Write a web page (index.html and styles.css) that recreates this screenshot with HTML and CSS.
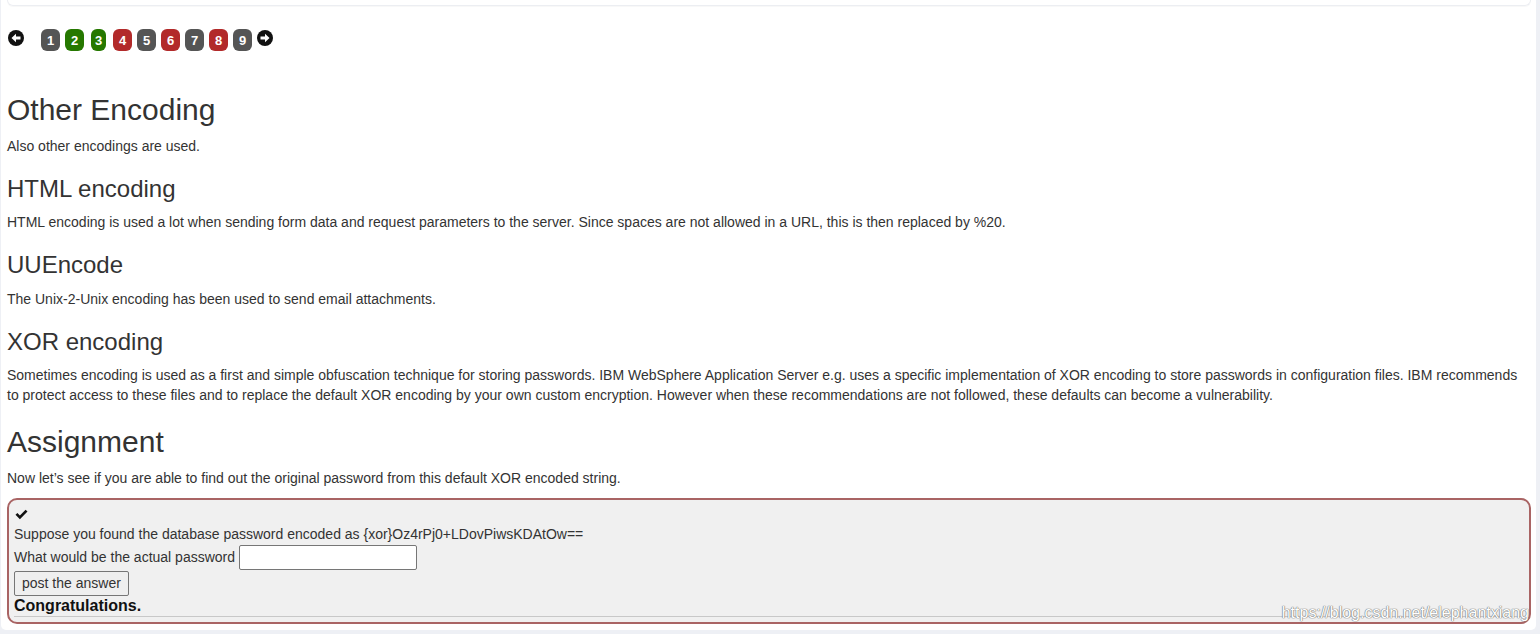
FILE: index.html
```html
<!DOCTYPE html>
<html>
<head>
<meta charset="utf-8">
<link rel="stylesheet" href="styles.css">
</head>
<body>
<div class="panel">
  <div class="top-card"></div>
  <div class="pager">
    <span class="arrow"><svg width="16" height="16" viewBox="0 0 16 16"><circle cx="8" cy="8" r="8" fill="#111"/><path d="M3.5 8 L8 3.8 L8 6.4 L12.5 6.4 L12.5 9.6 L8 9.6 L8 12.2 Z" fill="#fff"/></svg></span>
    <span class="pages">
      <span class="pg gray">1</span>
      <span class="pg green">2</span>
      <span class="pg green narrow">3</span>
      <span class="pg red">4</span>
      <span class="pg gray">5</span>
      <span class="pg red">6</span>
      <span class="pg gray">7</span>
      <span class="pg red">8</span>
      <span class="pg gray">9</span>
    </span>
    <span class="arrow"><svg width="16" height="16" viewBox="0 0 16 16"><circle cx="8" cy="8" r="8" fill="#111"/><path d="M12.5 8 L8 3.8 L8 6.4 L3.5 6.4 L3.5 9.6 L8 9.6 L8 12.2 Z" fill="#fff"/></svg></span>
  </div>

  <h2>Other Encoding</h2>
  <p>Also other encodings are used.</p>
  <h3>HTML encoding</h3>
  <p>HTML encoding is used a lot when sending form data and request parameters to the server. Since spaces are not allowed in a URL, this is then replaced by %20.</p>
  <h3>UUEncode</h3>
  <p>The Unix-2-Unix encoding has been used to send email attachments.</p>
  <h3>XOR encoding</h3>
  <p>Sometimes encoding is used as a first and simple obfuscation technique for storing passwords. IBM WebSphere Application Server e.g. uses a specific implementation of XOR encoding to store passwords in configuration files. IBM recommends to protect access to these files and to replace the default XOR encoding by your own custom encryption. However when these recommendations are not followed, these defaults can become a vulnerability.</p>
  <h2>Assignment</h2>
  <p>Now let’s see if you are able to find out the original password from this default XOR encoded string.</p>

  <div class="attack">
    <div class="check"><svg width="13" height="11" viewBox="0 0 13 11"><path d="M0.5 5.8 L2.4 3.9 L4.9 6.4 L10.6 0.7 L12.5 2.6 L4.9 10.2 Z" fill="#111"/></svg></div>
    <div class="line">Suppose you found the database password encoded as {xor}Oz4rPj0+LDovPiwsKDAtOw==</div>
    <div class="line input-line"><span>What would be the actual password</span><input class="field" type="text"></div>
    <div class="btn-line"><button class="btn">post the answer</button></div>
    <div class="feedback">Congratulations.</div>
    <div class="rule"></div>
    <span class="watermark">https://blog.csdn.net/elephantxiang</span>
  </div>
</div>
</body>
</html>
```

FILE: styles.css
```css
html, body {
  margin: 0;
  padding: 0;
}
body {
  background: #eef0f5;
  font-family: "Liberation Sans", Arial, Helvetica, sans-serif;
  font-size: 14px;
  line-height: 20px;
  color: #333;
}
.panel {
  background: #fff;
  margin: 0 4px 0 1px;
  height: 630px;
  border-radius: 0 0 5px 5px;
  padding: 0 5px 0 6px;
  box-sizing: border-box;
  overflow: hidden;
}
.top-card {
  height: 5px;
  border: 1px solid #eceef2;
  border-top: none;
  border-radius: 0 0 6px 6px;
  box-shadow: 0 1px 1px rgba(0,0,0,0.03);
}
.pager {
  display: flex;
  align-items: center;
  margin-top: 23px;
  height: 22px;
  padding-left: 1px;
}
.arrow {
  display: flex;
  width: 16px;
  height: 16px;
  margin-top: -4px;
}
.pages {
  display: flex;
  gap: 5px;
  margin: 0 5px 0 17px;
}
.pg {
  width: 19px;
  height: 22px;
  border-radius: 6px;
  color: #fff;
  font-weight: bold;
  font-size: 13px;
  line-height: 24px;
  text-align: center;
}
.pg.narrow { width: 15px; margin-right: 2px; margin-left: 2px; }
.gray { background: #555555; }
.green { background: #267800; }
.red { background: #b22a2a; }

h2, h3 {
  line-height: 1.1;
  margin: 20px 0 10px;
  color: #333;
  font-weight: normal;
}
h2 { font-size: 30px; }
h3 { font-size: 24px; }
.pager + h2 { margin-top: 42px; }
p { margin: 0 0 10px; }

.attack {
  position: relative;
  margin-top: 9px;
  border: 2px solid #a96464;
  border-radius: 10px;
  background: #f0f0f0;
  padding: 4px 5px 4px 5px;
  height: 126px;
  box-sizing: border-box;
}
.check {
  height: 20px;
  display: flex;
  align-items: center;
  padding-left: 1px;
}
.line { height: 20px; }
.input-line {
  height: 26px;
  display: flex;
  align-items: center;
  gap: 4px;
}
.field {
  width: 178px;
  height: 25px;
  box-sizing: border-box;
  border: 1px solid #767676;
  border-radius: 2px;
  background: #fff;
  padding: 1px 2px;
  font-family: inherit;
  font-size: 14px;
}
.btn-line { height: 26px; display: flex; align-items: center; }
.btn {
  height: 25px;
  box-sizing: border-box;
  padding: 0 7px;
  border: 1px solid #767676;
  border-radius: 2px;
  background: #efefef;
  font-family: inherit;
  font-size: 14px;
  color: #333;
}
.feedback {
  font-weight: bold;
  font-size: 16px;
  height: 20px;
  line-height: 20px;
  color: #111;
}
.rule {
  border-top: 1px solid #c8c8c8;
}
.watermark {
  position: absolute;
  right: 0;
  bottom: -1px;
  font-size: 16px;
  line-height: 20px;
  color: #fff;
  text-shadow: 0 0 1px #777, 0 0 1px #777, 0 0 1px #888;
}
```
